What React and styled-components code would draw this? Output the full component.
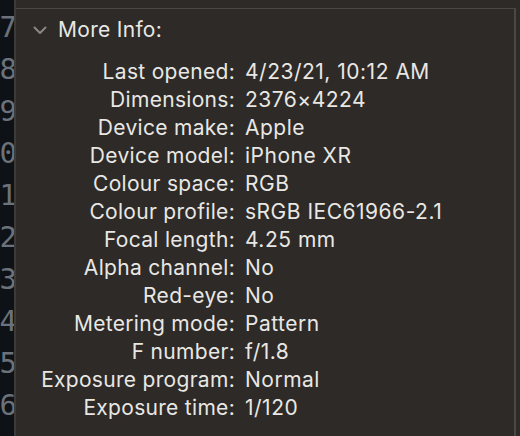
import styled, { createGlobalStyle } from "styled-components";

const Global = createGlobalStyle`
  html, body { margin: 0; padding: 0; background: #2d2a27; }
  body { font-family: Inter, "Noto Sans", sans-serif; -webkit-font-smoothing: antialiased; }
`;

const Page = styled.div`
  display: flex;
  width: 520px;
  height: 436px;
  overflow: hidden;
  background: #2d2a27;
`;

const Gutter = styled.div`
  width: 14px;
  flex: none;
  background: #0e1217;
  overflow: hidden;
  padding-top: 6px;
  display: flex;
  flex-direction: column;
  align-items: flex-end;
`;

const LineNo = styled.div`
  font-family: "DejaVu Sans Mono", "Liberation Mono", monospace;
  font-size: 29px;
  line-height: 42px;
  color: #6c727b;
  white-space: nowrap;
  margin-right: -3px;
`;

const Panel = styled.div`
  flex: 1;
  border-left: 2px solid #3d3b39;
  padding-top: 8px;
  display: flex;
`;

const Section = styled.section`
  width: 498px;
  border-top: 1px solid #4a4744;
  border-right: 2px solid #4a4744;
  color: #e9e7e4;
  font-size: 21px;
  letter-spacing: 0.3px;
`;

const Header = styled.div`
  display: flex;
  align-items: center;
  gap: 11px;
  height: 28px;
  margin-top: 7px;
  padding-left: 17px;
`;

const Title = styled.span`
  line-height: 28px;
`;

const Grid = styled.dl`
  display: grid;
  grid-template-columns: 219px auto;
  column-gap: 10px;
  margin: 14px 0 0;
  line-height: 28px;
`;

const Label = styled.dt`
  text-align: right;
  white-space: nowrap;
`;

const Value = styled.dd`
  margin: 0;
  white-space: nowrap;
  letter-spacing: 0.5px;
`;

const Chevron = () => (
  <svg width="14" height="9" viewBox="0 0 14 9" fill="none">
    <path d="M1.5 1.5 L7 7 L12.5 1.5" stroke="#8a8784" strokeWidth="2" strokeLinecap="round" strokeLinejoin="round" />
  </svg>
);

const rows = [
  ["Last opened:", "4/23/21, 10:12 AM"],
  ["Dimensions:", "2376×4224"],
  ["Device make:", "Apple"],
  ["Device model:", "iPhone XR"],
  ["Colour space:", "RGB"],
  ["Colour profile:", "sRGB IEC61966-2.1"],
  ["Focal length:", "4.25 mm"],
  ["Alpha channel:", "No"],
  ["Red-eye:", "No"],
  ["Metering mode:", "Pattern"],
  ["F number:", "f/1.8"],
  ["Exposure program:", "Normal"],
  ["Exposure time:", "1/120"],
];

const lines = [17, 18, 19, 20, 21, 22, 23, 24, 25, 26];

export default function App() {
  return (
    <Page>
      <Global />
      <Gutter>
        {lines.map((n) => (
          <LineNo key={n}>{n}</LineNo>
        ))}
      </Gutter>
      <Panel>
        <Section>
          <Header>
            <Chevron />
            <Title>More Info:</Title>
          </Header>
          <Grid>
            {rows.map(([k, v]) => (
              <>
                <Label key={k + "l"}>{k}</Label>
                <Value key={k + "v"}>{v}</Value>
              </>
            ))}
          </Grid>
        </Section>
      </Panel>
    </Page>
  );
}
